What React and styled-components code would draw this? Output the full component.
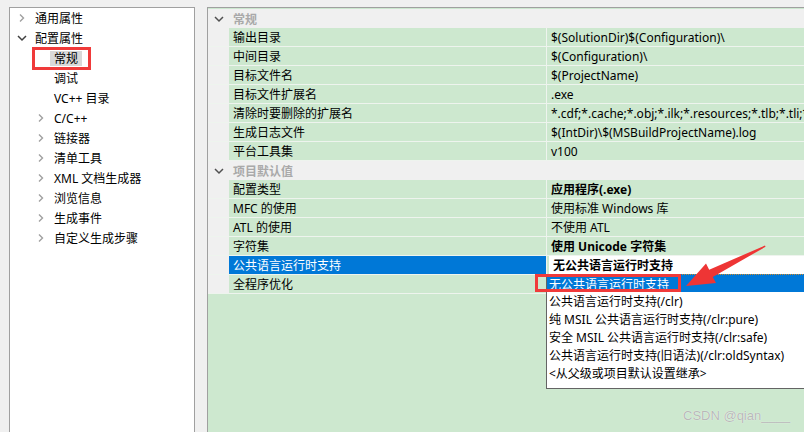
import React from 'react';
import styled, { createGlobalStyle } from 'styled-components';

const GlobalStyle = createGlobalStyle`
  html, body { margin: 0; padding: 0; }
  body {
    width: 804px; height: 432px; overflow: hidden;
    background: #f0f0f0;
    font-family: "Noto Sans", "Noto Sans CJK SC", sans-serif;
    font-size: 12px;
    color: #000;
  }
`

const Page = styled.div`
  display: flex;
  height: 432px;
  padding-top: 7px;
  box-sizing: border-box;
  gap: 12px;
  overflow: hidden;
`

const TreePanel = styled.div`
  flex: none;
  margin-left: 9px;
  width: 186px;
  height: 460px;
  box-sizing: border-box;
  border: 1px solid #a0a0a0;
  background: #fff;
  overflow: hidden;
`

const TreeRow = styled.div`
  position: relative;
  display: flex;
  align-items: center;
  height: 20px;
  padding-left: ${p => 4 + p.$level * 19}px;
`

const Twisty = styled.span`
  flex: none;
  width: 16px;
  height: 20px;
  display: flex;
  align-items: center;
  justify-content: center;
  margin-right: 5px;
`

const TreeLabel = styled.span`
  line-height: 15px;
  white-space: nowrap;
  ${p => p.$selected && `
    background: #d9d9d9;
    padding: 0 4px;
    margin-left: -4px;
  `}
`

const MarkBox = styled.div`
  position: absolute;
  border: 3px solid #f03a3a;
  pointer-events: none;
`

const GridPanel = styled.div`
  position: relative;
  flex: 1;
  min-width: 0;
  height: 460px;
  border-top: 1px solid #a0a0a0;
  border-left: 1px solid #a0a0a0;
  background: #cde8cf;
  padding-top: 1px;
`

const SectionRow = styled.div`
  display: flex;
  align-items: center;
  height: 19px;
  background: #f0f0f0;
`

const SectionTwisty = styled.span`
  width: 21px;
  display: flex;
  align-items: center;
  justify-content: center;
`

const SectionTitle = styled.span`
  padding-left: 4px;
  color: #a9a9a9;
  font-weight: bold;
`

const PropRow = styled.div`
  display: grid;
  grid-template-columns: 21px 317px 1px 1fr;
  height: 19px;
  box-sizing: border-box;
  border-bottom: 1px solid #eef4ee;
  background: #cde8cf;
`

const Gutter = styled.div`
  background: #f0f0f0;
`

const NameCell = styled.div`
  display: flex;
  align-items: center;
  padding-left: 4px;
  white-space: nowrap;
  overflow: hidden;
  background: ${p => p.$active ? '#0078d7' : 'transparent'};
  color: ${p => p.$active ? '#fff' : '#000'};
`

const Divider = styled.div`
  background: #eef4ee;
`

const ValueCell = styled.div`
  position: relative;
  display: flex;
  align-items: center;
  padding-left: 4px;
  white-space: nowrap;
  font-weight: ${p => p.$bold ? 'bold' : 'normal'};
  background: ${p => p.$editing ? '#fff' : 'transparent'};
  margin-left: ${p => p.$editing ? '2px' : '0'};
`

const DropList = styled.div`
  position: absolute;
  top: 18px;
  left: -3px;
  right: -20px;
  background: #fff;
  border: 1px solid #646464;
  border-top: none;
  padding-bottom: 6px;
  font-weight: normal;
  z-index: 2;
`

const DropItem = styled.div`
  position: relative;
  height: 18px;
  display: flex;
  align-items: center;
  padding-left: 2px;
  white-space: nowrap;
  ${p => p.$selected && `
    background: #0078d7;
    color: #fff;
    border-top: 1px dotted #d08a2a;
    box-sizing: border-box;
  `}
`

const Arrow = styled.svg`
  position: absolute;
  left: 0;
  top: 0;
  pointer-events: none;
  z-index: 3;
`

const Watermark = styled.div`
  position: absolute;
  left: 475px;
  top: 400px;
  font-family: "Liberation Sans", Arial, sans-serif;
  font-size: 13px;
  color: #b8b8b8;
  text-shadow: 0 0 1px #fff;
  z-index: 3;
`

const ChevronRight = () => (
  <svg width="8" height="10" viewBox="0 0 8 10">
    <path d="M2 1.5 L5.5 5 L2 8.5" fill="none" stroke="#a0a0a0" strokeWidth="1.4" />
  </svg>
)

const ChevronDown = ({color = '#404040'}) => (
  <svg width="10" height="8" viewBox="0 0 10 8">
    <path d="M1 2 L5 6 L9 2" fill="none" stroke={color} strokeWidth="1.5" />
  </svg>
)

const treeItems = [
  { text: '通用属性', level: 0, twisty: 'right' },
  { text: '配置属性', level: 0, twisty: 'down' },
  { text: '常规', level: 1, selected: true },
  { text: '调试', level: 1 },
  { text: 'VC++ 目录', level: 1 },
  { text: 'C/C++', level: 1, twisty: 'right' },
  { text: '链接器', level: 1, twisty: 'right' },
  { text: '清单工具', level: 1, twisty: 'right' },
  { text: 'XML 文档生成器', level: 1, twisty: 'right' },
  { text: '浏览信息', level: 1, twisty: 'right' },
  { text: '生成事件', level: 1, twisty: 'right' },
  { text: '自定义生成步骤', level: 1, twisty: 'right' },
]

const sections = [
  {
    title: '常规',
    rows: [
      { name: '输出目录', value: '$(SolutionDir)$(Configuration)\\' },
      { name: '中间目录', value: '$(Configuration)\\' },
      { name: '目标文件名', value: '$(ProjectName)' },
      { name: '目标文件扩展名', value: '.exe' },
      { name: '清除时要删除的扩展名', value: '*.cdf;*.cache;*.obj;*.ilk;*.resources;*.tlb;*.tli;*.t' },
      { name: '生成日志文件', value: '$(IntDir)\\$(MSBuildProjectName).log' },
      { name: '平台工具集', value: 'v100' },
    ]
  },
  {
    title: '项目默认值',
    rows: [
      { name: '配置类型', value: '应用程序(.exe)', bold: true },
      { name: 'MFC 的使用', value: '使用标准 Windows 库' },
      { name: 'ATL 的使用', value: '不使用 ATL' },
      { name: '字符集', value: '使用 Unicode 字符集', bold: true },
      { name: '公共语言运行时支持', value: '无公共语言运行时支持', bold: true, active: true },
      { name: '全程序优化', value: '' },
    ]
  }
]

const options = [
  '无公共语言运行时支持',
  '公共语言运行时支持(/clr)',
  '纯 MSIL 公共语言运行时支持(/clr:pure)',
  '安全 MSIL 公共语言运行时支持(/clr:safe)',
  '公共语言运行时支持(旧语法)(/clr:oldSyntax)',
  '<从父级或项目默认设置继承>',
]

const App = () => {
  return (
    <>
      <GlobalStyle />
      <Page>
        <TreePanel>
          {
            treeItems.map((item, index)=>(
              <TreeRow key={index} $level={item.level}>
                <Twisty>
                  { item.twisty=='right' && <ChevronRight /> }
                  { item.twisty=='down' && <ChevronDown /> }
                </Twisty>
                <TreeLabel $selected={item.selected}>{item.text}</TreeLabel>
                { item.selected && <MarkBox style={{left: 22, top: -1, width: 53, height: 17}} /> }
              </TreeRow>
            ))
          }
        </TreePanel>

        <GridPanel>
          {
            sections.map((section, si)=>(
              <div key={si}>
                <SectionRow>
                  <SectionTwisty><ChevronDown color="#505050" /></SectionTwisty>
                  <SectionTitle>{section.title}</SectionTitle>
                </SectionRow>
                {
                  section.rows.map((row, ri)=>(
                    <PropRow key={ri}>
                      <Gutter />
                      <NameCell $active={row.active}>{row.name}</NameCell>
                      <Divider />
                      <ValueCell $bold={row.bold} $editing={row.active}>
                        {row.value}
                        {
                          row.active && (
                            <DropList>
                              {
                                options.map((opt, oi)=>(
                                  <DropItem key={oi} $selected={oi==0}>
                                    {opt}
                                    { oi==0 && <MarkBox style={{left: -12, top: -1, width: 140, height: 12}} /> }
                                  </DropItem>
                                ))
                              }
                            </DropList>
                          )
                        }
                      </ValueCell>
                    </PropRow>
                  ))
                }
              </div>
            ))
          }
          <Arrow width="596" height="424" viewBox="208 8 596 424">
            <polygon
              points="765,245.5 709.2,269.7 706,263.5 686,286 716,283 712.8,276.9 765.5,246.8"
              fill="#ee3535"
            />
          </Arrow>
          <Watermark>CSDN @qian____</Watermark>
        </GridPanel>
      </Page>
    </>
  );
};

export default App;
